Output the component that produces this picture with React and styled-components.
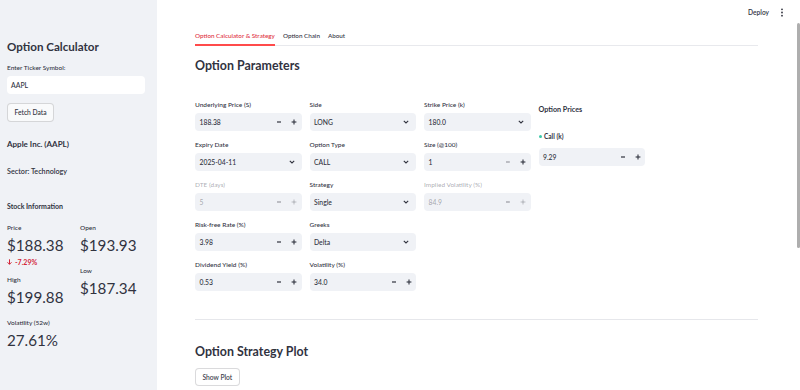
import React from "react";
import styled, { createGlobalStyle } from "styled-components";

const GlobalStyle = createGlobalStyle`
  html, body { margin: 0; padding: 0; background: #ffffff; }
  body {
    font-family: "Lato", "Noto Sans", sans-serif;
    color: #31333f;
    overflow: hidden;
    -webkit-font-smoothing: antialiased;
  }
  * { box-sizing: border-box; }
`;

const TEXT = "#31333f";
const MUTED = "rgba(49, 51, 63, 0.4)";
const FIELD_BG = "#f0f2f6";

const Page = styled.div`
  display: flex;
  width: 800px;
  height: 390px;
  overflow: hidden;
`;

/* ---------- Sidebar ---------- */
const Sidebar = styled.aside`
  width: 157px;
  flex: 0 0 157px;
  height: 390px;
  background: #f0f2f6;
  padding: 40px 12px 0 7px;
  display: flex;
  flex-direction: column;
`;

const SideTitle = styled.h1`
  margin: 0;
  font-size: 11.6px;
  line-height: 14px;
  font-weight: 700;
`;

const Label = styled.div`
  font-size: 6.5px;
  line-height: 10px;
  font-weight: 500;
  margin-top: ${(p) => p.$mt || 0}px;
  color: ${(p) => (p.$disabled ? MUTED : TEXT)};
  white-space: nowrap;
`;

const TextBox = styled.div`
  margin-top: 3px;
  height: 18px;
  background: #ffffff;
  border-radius: 4px;
  padding: 0 4px;
  display: flex;
  align-items: center;
  font-size: 6.9px;
  font-weight: 500;
`;

const Button = styled.button`
  align-self: flex-start;
  margin-top: ${(p) => p.$mt || 0}px;
  height: 18.5px;
  padding: 0 6.5px;
  border: 1px solid rgba(49, 51, 63, 0.18);
  border-radius: 4px;
  background: ${(p) => (p.$onSide ? "#f9fafb" : "#ffffff")};
  font-family: inherit;
  font-size: 6.7px;
  font-weight: 500;
  color: ${TEXT};
  display: flex;
  align-items: center;
  cursor: pointer;
`;

const SideHeading = styled.div`
  margin-top: ${(p) => p.$mt}px;
  font-size: ${(p) => p.$size}px;
  line-height: 12px;
  font-weight: ${(p) => p.$weight || 700};
`;

const MetricGrid = styled.div`
  margin-top: 11px;
  display: grid;
  grid-template-columns: 65px 65px;
  column-gap: 8px;
`;

const MetricCol = styled.div`
  display: flex;
  flex-direction: column;
  gap: 8px;
`;

const MetricBox = styled.div`
  display: flex;
  flex-direction: column;
  padding-bottom: ${(p) => (p.$hasDelta ? 0 : 3)}px;
  margin-top: ${(p) => p.$mt || 0}px;
`;

const MetricValue = styled.div`
  margin-top: 2px;
  font-size: 15.2px;
  line-height: 20px;
  font-weight: 400;
  white-space: nowrap;
`;

const Delta = styled.div`
  margin-top: 2.5px;
  height: 10px;
  display: flex;
  align-items: center;
  gap: 3px;
  font-size: 7px;
  font-weight: 700;
  color: #d3263a;
`;

/* ---------- Main ---------- */
const Main = styled.main`
  position: relative;
  flex: 1;
  height: 390px;
  display: flex;
  flex-direction: column;
`;

const Header = styled.header`
  height: 24px;
  display: flex;
  align-items: center;
  justify-content: flex-end;
  gap: 11px;
  padding-right: 16px;
`;

const DeployLink = styled.span`
  font-size: 6.6px;
  font-weight: 600;
  color: ${TEXT};
`;

const Content = styled.div`
  padding: 0 42px 0 38px;
  display: flex;
  flex-direction: column;
`;

const TabList = styled.nav`
  display: flex;
  gap: 8px;
  padding-top: 7px;
  border-bottom: 1px solid #e8e9ed;
`;

const Tab = styled.div`
  font-size: 6.3px;
  line-height: 10px;
  padding-bottom: 3px;
  margin-bottom: -1px;
  border-bottom: 2px solid ${(p) => (p.$active ? "#ff4b4b" : "transparent")};
  color: ${(p) => (p.$active ? "#e0323f" : TEXT)};
  font-weight: 500;
  white-space: nowrap;
`;

const H2 = styled.h2`
  margin: ${(p) => p.$mt}px 0 0 0;
  font-size: 12.4px;
  line-height: 16px;
  font-weight: 700;
`;

const Columns = styled.div`
  margin-top: 26px;
  display: flex;
  gap: 8px;
`;

const Column = styled.div`
  width: 106.5px;
  display: flex;
  flex-direction: column;
  gap: 9px;
`;

const Field = styled.div`
  display: flex;
  flex-direction: column;
`;

const InputShell = styled.div`
  margin-top: ${(p) => (p.$mt != null ? p.$mt : 3)}px;
  height: 18px;
  border-radius: 4px;
  background: ${FIELD_BG};
  display: flex;
  align-items: center;
  padding-left: 4.5px;
  color: ${(p) => (p.$disabled ? MUTED : TEXT)};
`;

const InputValue = styled.span`
  flex: 1;
  font-size: 6.8px;
  font-weight: 500;
  white-space: nowrap;
`;

const StepButton = styled.span`
  width: 15px;
  height: 18px;
  display: flex;
  align-items: center;
  justify-content: center;
  color: ${(p) => (p.$dim === 2 ? "rgba(49,51,63,0.25)" : p.$dim ? "rgba(49,51,63,0.45)" : TEXT)};
`;

const ChevronWrap = styled.span`
  width: 20px;
  height: 18px;
  display: flex;
  align-items: center;
  justify-content: center;
  color: ${TEXT};
`;

const PricesTitle = styled.div`
  margin-top: 4.5px;
  font-size: 7.2px;
  line-height: 10px;
  font-weight: 700;
`;

const CallLabel = styled.div`
  margin-top: 8px;
  display: flex;
  align-items: center;
  gap: 2px;
  font-size: 6.5px;
  line-height: 10px;
  font-weight: 700;
`;

const Dot = styled.span`
  width: 3.5px;
  height: 3.5px;
  border-radius: 50%;
  background: #3cc8a8;
`;

const Divider = styled.hr`
  margin: 28px 0 0 0;
  border: none;
  border-top: 1px solid #e6e7eb;
  height: 0;
`;

const Scrollbar = styled.div`
  position: absolute;
  right: 0;
  top: 23px;
  width: 3.5px;
  height: 225px;
  border-radius: 2px;
  background: #aeaeae;
`;

/* ---------- Icons ---------- */
const Minus = () => (
  <svg width="6" height="6" viewBox="0 0 6 6">
    <line x1="1" y1="3" x2="5" y2="3" stroke="currentColor" strokeWidth="1.2" />
  </svg>
);
const Plus = () => (
  <svg width="6" height="6" viewBox="0 0 6 6">
    <line x1="0.6" y1="3" x2="5.4" y2="3" stroke="currentColor" strokeWidth="1.1" />
    <line x1="3" y1="0.6" x2="3" y2="5.4" stroke="currentColor" strokeWidth="1.1" />
  </svg>
);
const Chevron = () => (
  <svg width="6" height="4" viewBox="0 0 6 4">
    <polyline points="0.8,0.8 3,3 5.2,0.8" fill="none" stroke="currentColor" strokeWidth="1.1" />
  </svg>
);
const DownArrow = () => (
  <svg width="5" height="6" viewBox="0 0 5 6">
    <line x1="2.5" y1="0.3" x2="2.5" y2="5.3" stroke="currentColor" strokeWidth="1" />
    <polyline points="0.5,3.3 2.5,5.3 4.5,3.3" fill="none" stroke="currentColor" strokeWidth="1" />
  </svg>
);
const Kebab = () => (
  <svg width="4" height="9" viewBox="0 0 4 9">
    <circle cx="2" cy="1.3" r="0.9" fill={TEXT} />
    <circle cx="2" cy="4.5" r="0.9" fill={TEXT} />
    <circle cx="2" cy="7.7" r="0.9" fill={TEXT} />
  </svg>
);

/* ---------- Widgets ---------- */
const NumberInput = ({ label, value, disabled, minusDim }) => (
  <Field>
    <Label $disabled={disabled}>{label}</Label>
    <InputShell $disabled={disabled}>
      <InputValue>{value}</InputValue>
      <StepButton $dim={disabled || minusDim ? 1 : 0}>
        <Minus />
      </StepButton>
      <StepButton $dim={disabled ? 2 : 0}>
        <Plus />
      </StepButton>
    </InputShell>
  </Field>
);

const Select = ({ label, value }) => (
  <Field>
    <Label>{label}</Label>
    <InputShell>
      <InputValue>{value}</InputValue>
      <ChevronWrap>
        <Chevron />
      </ChevronWrap>
    </InputShell>
  </Field>
);

const Metric = ({ label, value, delta, mt }) => (
  <MetricBox $hasDelta={!!delta} $mt={mt}>
    <Label>{label}</Label>
    <MetricValue>{value}</MetricValue>
    {delta && (
      <Delta>
        <DownArrow />
        {delta}
      </Delta>
    )}
  </MetricBox>
);

export default function App() {
  return (
    <>
      <GlobalStyle />
      <Page>
        <Sidebar>
          <SideTitle>Option Calculator</SideTitle>
          <Label $mt={9}>Enter Ticker Symbol:</Label>
          <TextBox>AAPL</TextBox>
          <Button $mt={9} $onSide>
            Fetch Data
          </Button>
          <SideHeading $mt={16} $size={8}>
            Apple Inc. (AAPL)
          </SideHeading>
          <SideHeading $mt={16} $size={7.2} $weight={600}>
            Sector: Technology
          </SideHeading>
          <SideHeading $mt={22} $size={7}>
            Stock Information
          </SideHeading>
          <MetricGrid>
            <MetricCol>
              <Metric label="Price" value="$188.38" delta="-7.29%" />
              <Metric label="High" value="$199.88" />
            </MetricCol>
            <MetricCol>
              <Metric label="Open" value="$193.93" />
              <Metric label="Low" value="$187.34" />
            </MetricCol>
          </MetricGrid>
          <Metric label="Volatility (52w)" value="27.61%" mt={8} />
        </Sidebar>

        <Main>
          <Header>
            <DeployLink>Deploy</DeployLink>
            <Kebab />
          </Header>
          <Content>
            <TabList>
              <Tab $active>Option Calculator &amp; Strategy</Tab>
              <Tab>Option Chain</Tab>
              <Tab>About</Tab>
            </TabList>

            <H2 $mt={12}>Option Parameters</H2>

            <Columns>
              <Column>
                <NumberInput label="Underlying Price (S)" value="188.38" />
                <Select label="Expiry Date" value="2025-04-11" />
                <NumberInput label="DTE (days)" value="5" disabled />
                <NumberInput label="Risk-free Rate (%)" value="3.98" />
                <NumberInput label="Dividend Yield (%)" value="0.53" />
              </Column>
              <Column>
                <Select label="Side" value="LONG" />
                <Select label="Option Type" value="CALL" />
                <Select label="Strategy" value="Single" />
                <Select label="Greeks" value="Delta" />
                <NumberInput label="Volatility (%)" value="34.0" />
              </Column>
              <Column>
                <Select label="Strike Price (k)" value="180.0" />
                <NumberInput label="Size (@100)" value="1" minusDim />
                <NumberInput label="Implied Volatility (%)" value="84.9" disabled />
              </Column>
              <Column>
                <PricesTitle>Option Prices</PricesTitle>
                <Field>
                  <CallLabel>
                    <Dot />
                    Call (k)
                  </CallLabel>
                  <InputShell $mt={6.5}>
                    <InputValue>9.29</InputValue>
                    <StepButton>
                      <Minus />
                    </StepButton>
                    <StepButton>
                      <Plus />
                    </StepButton>
                  </InputShell>
                </Field>
              </Column>
            </Columns>

            <Divider />
            <H2 $mt={24}>Option Strategy Plot</H2>
            <Button $mt={7.5}>Show Plot</Button>
          </Content>
          <Scrollbar />
        </Main>
      </Page>
    </>
  );
}
